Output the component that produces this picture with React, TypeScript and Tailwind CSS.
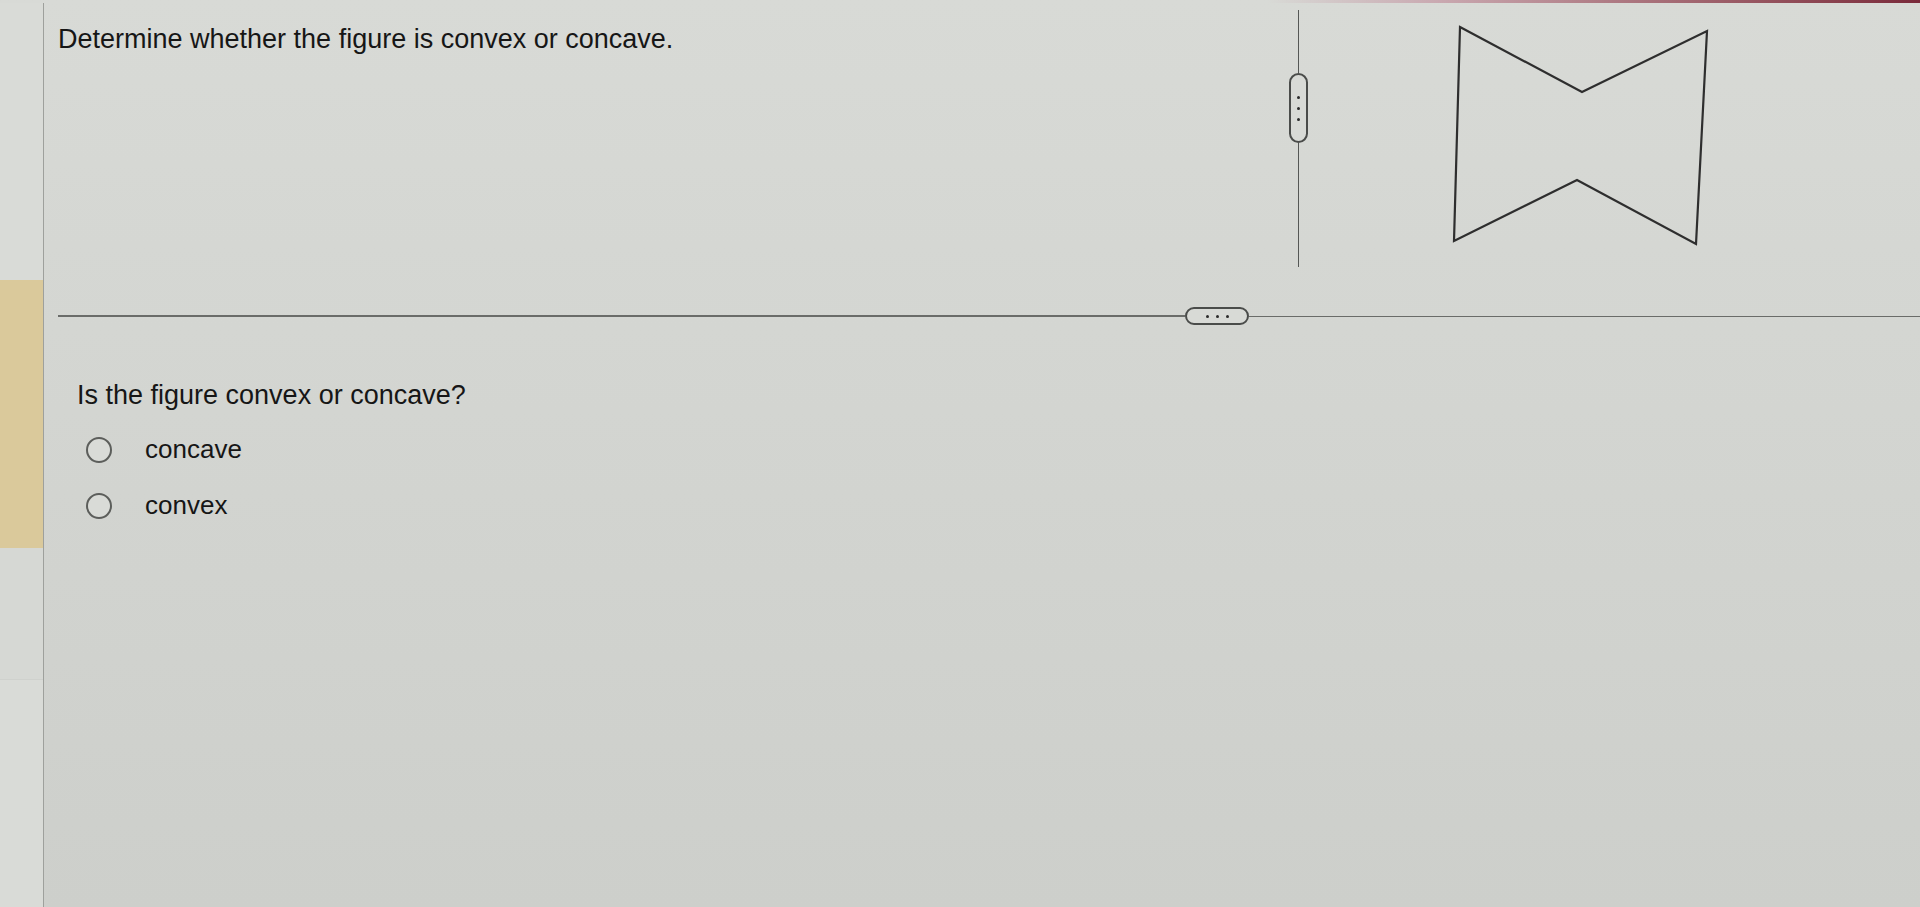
const font = { fontFamily: '"Liberation Sans", Arial, sans-serif' }

function Dots({ vertical }: { vertical?: boolean }) {
  return (
    <div className={vertical ? 'flex flex-col items-center gap-[8px]' : 'flex items-center gap-[7px]'}>
      <span className="h-[3px] w-[3px] rounded-full bg-[#2b2b2b]" />
      <span className="h-[3px] w-[3px] rounded-full bg-[#2b2b2b]" />
      <span className="h-[3px] w-[3px] rounded-full bg-[#2b2b2b]" />
    </div>
  )
}

function Radio({ label }: { label: string }) {
  return (
    <label className="flex h-[31px] items-center gap-[33px] pl-[28px]">
      <span className="h-[26px] w-[26px] rounded-full border-[2.5px] border-[#5c5e5b] bg-[#d9dbd7]" />
      <span className="text-[26px] leading-[31px] text-[#161616]">{label}</span>
    </label>
  )
}

export default function App() {
  return (
    <div className="flex h-[907px] w-[1920px] flex-col overflow-hidden bg-linear-to-b from-[#d8dad6] to-[#cdcfcb]" style={font}>
      <div className="h-[3px] shrink-0 bg-linear-to-r from-transparent from-[66%] via-[#c9a8b0] via-[75%] to-[#7a2a3b]" />
      <div className="flex flex-1">
        {/* Left rail */}
        <div className="flex w-[44px] shrink-0 flex-col border-r border-[#9ea09c] bg-[#d9dbd7]">
          <div className="h-[277px]" />
          <div className="h-[268px] bg-[#dac99b]" />
          <div className="h-[132px] border-b border-[#cfd1cd] bg-[#d6d8d4]" />
        </div>

        {/* Main */}
        <div className="flex flex-1 flex-col pl-[14px]">
          {/* Top section */}
          <div className="flex h-[304px]">
            <div className="w-[1230px] shrink-0 pt-[21px]">
              <p className="text-[27px] leading-[31px] text-[#161616]">
                Determine whether the figure is convex or concave.
              </p>
            </div>
            <div className="flex w-[20px] shrink-0 flex-col items-center pt-[7px]">
              <div className="h-[63px] w-px bg-[#555755]" />
              <button className="flex h-[70px] w-[19px] items-center justify-center rounded-full border-2 border-[#4a4c4a] bg-[#d8dad6]">
                <Dots vertical />
              </button>
              <div className="h-[124px] w-px bg-[#555755]" />
            </div>
            <div className="flex-1 pl-[143px] pt-[21px]">
              <svg width="262" height="226" viewBox="0 0 262 226" fill="none">
                <polygon
                  points="9,3 131,68 256,7 245,220 126,156 3,217"
                  stroke="#2e2e2e"
                  strokeWidth="2.2"
                  strokeLinejoin="miter"
                />
              </svg>
            </div>
          </div>

          {/* Divider with expand button */}
          <div className="flex h-[18px] items-center">
            <div className="h-[2px] w-[1127px] bg-[#6a6c69]" />
            <button className="flex h-[18px] w-[64px] items-center justify-center rounded-full border-2 border-[#4a4c4a] bg-[#d8dad6]">
              <Dots />
            </button>
            <div className="h-px flex-1 bg-[#6a6c69]" />
          </div>

          {/* Answer area */}
          <div className="flex flex-col pl-[19px] pt-[55px]">
            <p className="text-[27px] leading-[31px] text-[#161616]">Is the figure convex or concave?</p>
          </div>
          <div className="flex flex-col gap-[25px] pt-[23px]">
            <Radio label="concave" />
            <Radio label="convex" />
          </div>
        </div>
      </div>
    </div>
  )
}
